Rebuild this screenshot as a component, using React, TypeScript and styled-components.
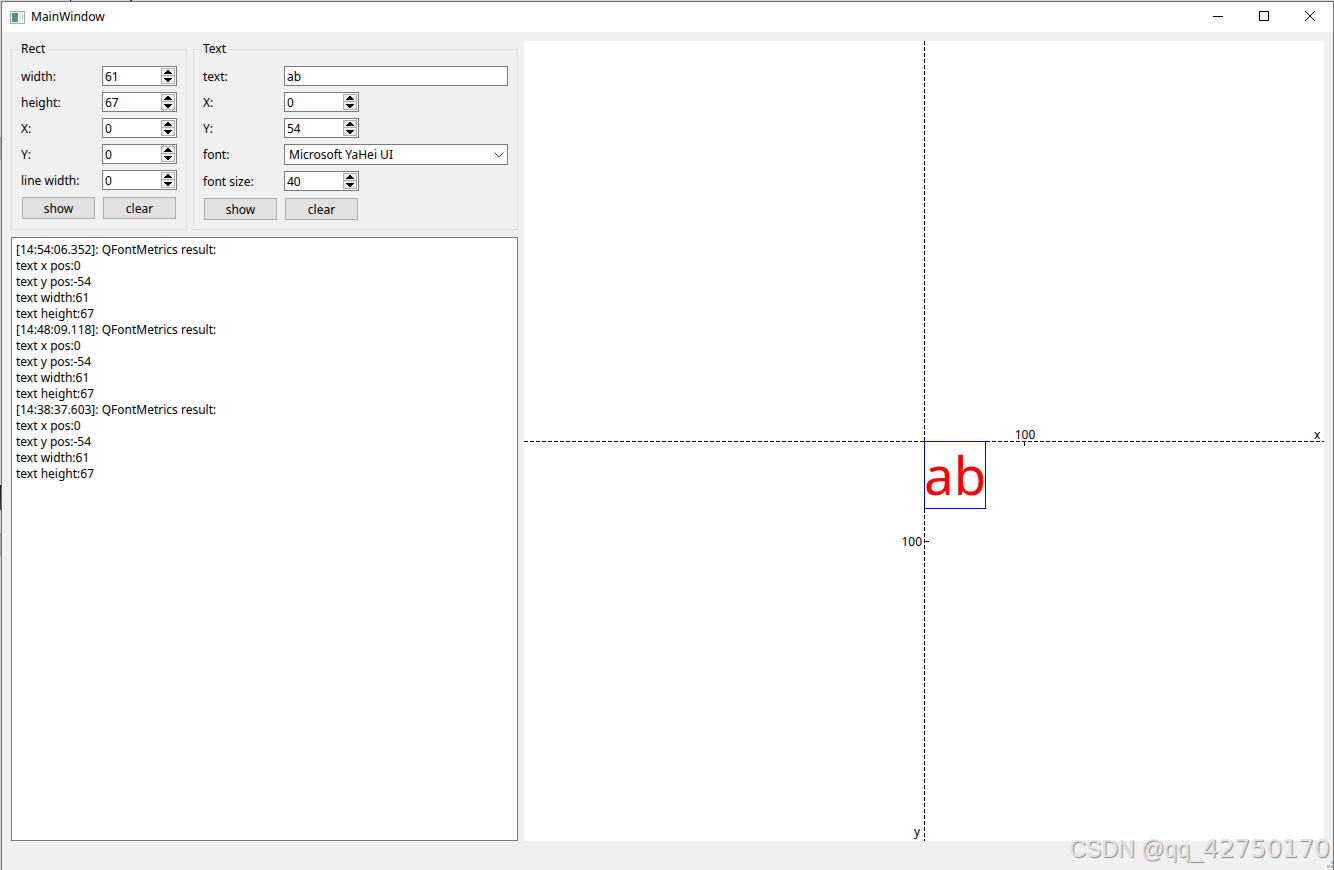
import React, { useId, useState } from "react";
import styled, { createGlobalStyle } from "styled-components";

const GlobalStyle = createGlobalStyle`
  *, *::before, *::after { box-sizing: border-box; }
  html, body, #root { height: 100%; }
  body {
    margin: 0;
    color: #000;
    background: #d4d4d4;
    font: 12px/16px "Noto Sans", "Open Sans", sans-serif;
  }
  input, select, button, textarea { font: inherit; color: inherit; border-radius: 0; }
`;

const Desktop = styled.div`
  min-height: 100%;
  display: flex;
  padding: 1px 0 0 1px;
  background:
    linear-gradient(#000, #000) 70px 0 / 1px 1px no-repeat,
    linear-gradient(#007000, #007000) 130px 0 / 2px 1px no-repeat,
    linear-gradient(#a8a8a8, #a8a8a8) 0 137px / 1px 23px no-repeat,
    linear-gradient(#111, #444) 0 485px / 1px 25px no-repeat,
    linear-gradient(#a8a8a8, #a8a8a8) 0 533px / 1px 23px no-repeat,
    #d4d4d4;
`;

const Window = styled.div`
  position: relative;
  flex: 1;
  display: flex;
  flex-direction: column;
  background: #f0f0f0;
  border: 1px solid #6e6e6e;
  border-bottom: 0;
`;

const TitleBar = styled.header`
  display: flex;
  align-items: center;
  height: 30px;
  padding-left: 8px;
  background: #fff;
`;

const Title = styled.h1`
  flex: 1;
  margin: 0 0 0 6px;
  font-size: 12px;
  font-weight: 400;
`;

const CaptionButton = styled.button`
  display: grid;
  place-items: center;
  width: 46px;
  height: 30px;
  padding: 0 0 2px;
  border: 0;
  background: transparent;
`;

const Main = styled.main`
  flex: 1;
  display: flex;
  gap: 6px;
  padding: 9px 9px 0;
`;

const SidePanel = styled.div`
  width: 507px;
  display: flex;
  flex-direction: column;
  gap: 7px;
`;

const Groups = styled.div`
  display: flex;
  gap: 6px;
`;

const Group = styled.fieldset<{ $grow?: boolean }>`
  flex: ${(p) => (p.$grow ? "1" : "0 0 176px")};
  min-width: 0;
  margin: 0;
  padding: 9px;
  border: 1px solid #dcdcdc;
`;

const Legend = styled.legend`
  margin-left: -2px;
  padding: 0 2px;
`;

const Fields = styled.div`
  display: flex;
  flex-direction: column;
  gap: 6px;
`;

const Row = styled.div`
  display: grid;
  grid-template-columns: 81px 1fr;
  align-items: center;
`;

const Label = styled.label`
  padding-top: 1px;
`;

const Spin = styled.div`
  display: flex;
  width: 75px;
  height: 20px;
  padding: 1px;
  background: #fff;
  border: 1px solid #7a7a7a;
`;

const SpinInput = styled.input`
  flex: 1;
  min-width: 0;
  height: 16px;
  padding: 1px 0 0 1px;
  border: 0;
  outline: 0;
  background: transparent;
  appearance: textfield;
  &::-webkit-inner-spin-button { appearance: none; }
`;

const SpinButtons = styled.div`
  display: grid;
  grid-template-rows: 1fr 1fr;
  width: 14px;
`;

const SpinButton = styled.button`
  display: grid;
  place-items: center;
  min-height: 0;
  padding: 0;
  background: #f0f0f0;
  border: 1px solid #acacac;
  & + & { border-top: 0; }
`;

const TextInput = styled.input`
  width: 100%;
  height: 20px;
  padding: 0 2px;
  background: #fff;
  border: 1px solid #7a7a7a;
  outline: 0;
`;

const SelectBox = styled.div`
  display: grid;
  align-items: center;
  > * { grid-area: 1 / 1; }
  > svg { justify-self: end; margin-right: 4px; pointer-events: none; }
`;

const Select = styled.select`
  width: 100%;
  height: 21px;
  padding: 0 4px;
  appearance: none;
  background: #fff;
  border: 1px solid #7a7a7a;
  outline: 0;
`;

const Actions = styled.div`
  display: flex;
  gap: 8px;
  margin: 7px 0 0 1px;
`;

const ActionButton = styled.button`
  width: 73px;
  height: 22px;
  padding: 2px 0 0;
  background: #e1e1e1;
  border: 1px solid #adadad;
`;

const Log = styled.textarea`
  flex: 1;
  padding: 4px;
  background: #fff;
  border: 1px solid #7a7a7a;
  outline: 0;
  resize: none;
`;

const Canvas = styled.svg`
  flex: 1;
  min-width: 0;
  background: #fff;
  font-size: 12px;
`;

const StatusBar = styled.footer`
  display: flex;
  justify-content: flex-end;
  align-items: flex-end;
  height: 29px;
`;

const Watermark = styled.div`
  position: absolute;
  right: 3px;
  bottom: 6px;
  font: 23px/30px "Liberation Sans", Arial, sans-serif;
  color: #e2e2e2;
  text-shadow: 1px 1px 1px #8a8a8a;
  pointer-events: none;
`;

const WatermarkNumber = styled.span`
  font: 25px/30px "DejaVu Sans", Verdana, sans-serif;
`;

const AppIcon = () => (
  <svg width="15" height="13" viewBox="0 0 15 13" aria-hidden="true">
    <defs>
      <linearGradient id="screen" x1="0" y1="0" x2="1" y2="1">
        <stop offset="0" stopColor="#4a7fa8" />
        <stop offset="1" stopColor="#53a583" />
      </linearGradient>
    </defs>
    <rect x="0.5" y="0.5" width="14" height="12" fill="#f2f4f5" stroke="#a3a9ad" />
    <rect x="2" y="2" width="6" height="9" fill="url(#screen)" />
    <rect x="9" y="2" width="2" height="9" fill="#e1e7ea" />
    <rect x="12" y="2" width="1" height="6" fill="#b4d6cd" />
  </svg>
);

function SpinField({ label, initial }: { label: string; initial: number }) {
  const id = useId();
  const [value, setValue] = useState(initial);
  return (
    <Row>
      <Label htmlFor={id}>{label}</Label>
      <Spin>
        <SpinInput id={id} type="number" value={value} onChange={(e) => setValue(Number(e.target.value))} />
        <SpinButtons>
          <SpinButton type="button" aria-label={`Increase ${label}`} onClick={() => setValue(value + 1)}>
            <svg width="8" height="4" shapeRendering="crispEdges"><path d="M3 0h2v1h1v1h1v1h1v1H0V3h1V2h1V1h1z" /></svg>
          </SpinButton>
          <SpinButton type="button" aria-label={`Decrease ${label}`} onClick={() => setValue(value - 1)}>
            <svg width="8" height="4" shapeRendering="crispEdges"><path d="M0 0h8v1H7v1H6v1H5v1H3V3H2V2H1V1H0z" /></svg>
          </SpinButton>
        </SpinButtons>
      </Spin>
    </Row>
  );
}

const ActionRow = () => (
  <Actions>
    <ActionButton type="button">show</ActionButton>
    <ActionButton type="button">clear</ActionButton>
  </Actions>
);

const logText = ["14:54:06.352", "14:48:09.118", "14:38:37.603"]
  .map((t) => `[${t}]: QFontMetrics result:\ntext x pos:0\ntext y pos:-54\ntext width:61\ntext height:67`)
  .join("\n");

export default function App() {
  return (
    <Desktop>
      <GlobalStyle />
      <Window>
        <TitleBar>
          <AppIcon />
          <Title>MainWindow</Title>
          <CaptionButton type="button" aria-label="Minimize">
            <svg width="10" height="10"><path d="M0 5.5h10" stroke="#000" /></svg>
          </CaptionButton>
          <CaptionButton type="button" aria-label="Maximize">
            <svg width="10" height="10"><rect x="0.5" y="0.5" width="9" height="9" fill="none" stroke="#000" /></svg>
          </CaptionButton>
          <CaptionButton type="button" aria-label="Close">
            <svg width="10" height="10"><path d="M0 0l10 10M10 0L0 10" stroke="#000" /></svg>
          </CaptionButton>
        </TitleBar>
        <Main>
          <SidePanel>
            <Groups>
              <Group>
                <Legend>Rect</Legend>
                <Fields>
                  <SpinField label="width:" initial={61} />
                  <SpinField label="height:" initial={67} />
                  <SpinField label="X:" initial={0} />
                  <SpinField label="Y:" initial={0} />
                  <SpinField label="line width:" initial={0} />
                </Fields>
                <ActionRow />
              </Group>
              <Group $grow>
                <Legend>Text</Legend>
                <Fields>
                  <Row>
                    <Label htmlFor="text">text:</Label>
                    <TextInput id="text" type="text" defaultValue="ab" />
                  </Row>
                  <SpinField label="X:" initial={0} />
                  <SpinField label="Y:" initial={54} />
                  <Row>
                    <Label htmlFor="font">font:</Label>
                    <SelectBox>
                      <Select id="font" defaultValue="Microsoft YaHei UI">
                        <option>Microsoft YaHei UI</option>
                      </Select>
                      <svg width="10" height="6"><path d="M0.5 0.5L5 5L9.5 0.5" fill="none" stroke="#444" /></svg>
                    </SelectBox>
                  </Row>
                  <SpinField label="font size:" initial={40} />
                </Fields>
                <ActionRow />
              </Group>
            </Groups>
            <Log readOnly aria-label="Log" value={logText} />
          </SidePanel>
          <Canvas>
            <svg y="50%" overflow="visible">
              <path d="M0 0.5H4000" stroke="#000" strokeDasharray="4 2" />
            </svg>
            <svg x="50%" overflow="visible">
              <path d="M0.5 0V4000" stroke="#000" strokeDasharray="4 2" />
            </svg>
            <svg x="50%" y="50%" overflow="visible">
              <path d="M100.5 0V5M0 100.5H5" stroke="#000" />
              <text x="101" y="-2" textAnchor="middle">100</text>
              <text x="-2" y="105" textAnchor="end">100</text>
              <rect x="0.5" y="0.5" width="61" height="67" fill="none" stroke="#00f" />
              <text x="0" y="54" fontSize="53" fill="#f00">ab</text>
            </svg>
            <svg x="100%" y="50%" overflow="visible">
              <text x="-10" y="-2">x</text>
            </svg>
            <svg x="50%" y="100%" overflow="visible">
              <text x="-10" y="-5">y</text>
            </svg>
          </Canvas>
        </Main>
        <StatusBar>
          <svg width="6" height="10" fill="#bfbfbf" aria-hidden="true">
            <path d="M0 5h3v3H0zM4 5h2v3H4zM4 1h2v3H4z" />
          </svg>
        </StatusBar>
        <Watermark>CSDN @qq_<WatermarkNumber>42750170</WatermarkNumber></Watermark>
      </Window>
    </Desktop>
  );
}
